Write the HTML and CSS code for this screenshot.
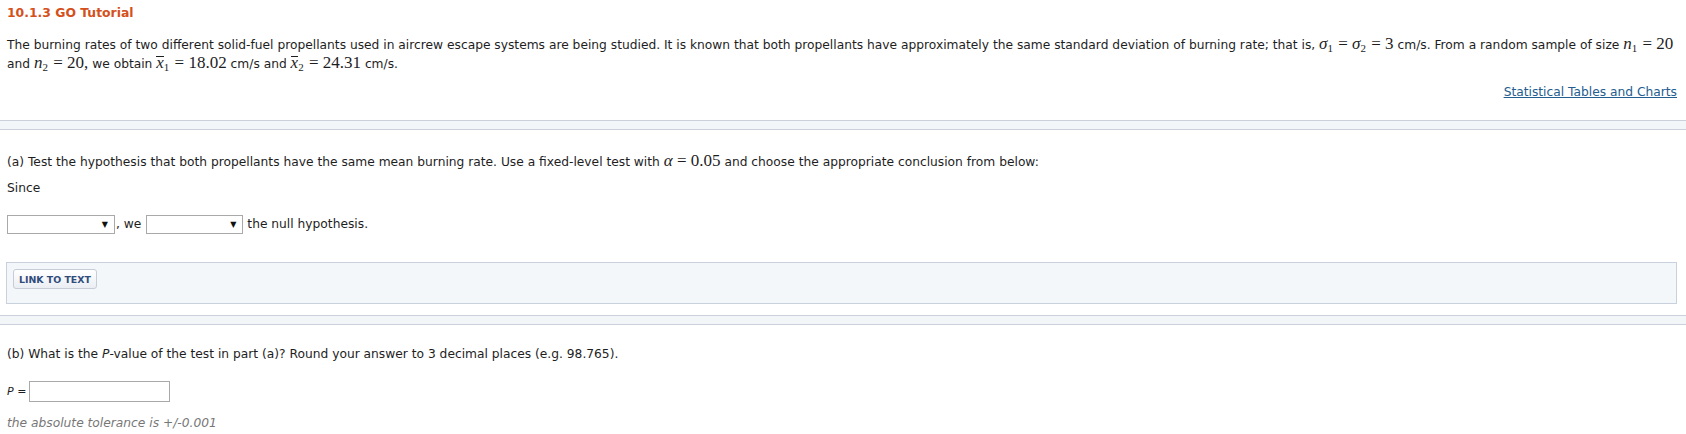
FILE: index.html
```html
<!DOCTYPE html>
<html lang="en">
<head>
    <meta charset="UTF-8">
    <title>10.1.3 GO Tutorial</title>
    <link rel="stylesheet" href="styles.css">
</head>
<body>

<!-- Question header -->
<div class="page">
    <div class="title">10.1.3 GO Tutorial</div>
    <p class="intro">
        The burning rates of two different solid-fuel propellants used in aircrew escape systems are being studied. It is known that both propellants have approximately the same standard deviation of burning rate; that is,
        <span class="math"><i>σ</i><sub>1</sub> = <i>σ</i><sub>2</sub> = 3</span> cm/s. From a random sample of size <span class="math"><i>n</i><sub>1</sub> = 20</span>
        and <span class="math"><i>n</i><sub>2</sub> = 20,</span> we obtain <span class="math"><i class="bar">x</i><sub>1</sub> = 18.02</span> cm/s and <span class="math"><i class="bar">x</i><sub>2</sub> = 24.31</span> cm/s.
    </p>
    <div class="tables-link"><a href="#">Statistical Tables and Charts</a></div>
</div>

<div class="divider"></div>

<!-- Part (a) -->
<div class="page part-a">
    <p class="question">(a) Test the hypothesis that both propellants have the same mean burning rate. Use a fixed-level test with <span class="math"><i>α</i> = 0.05</span> and choose the appropriate conclusion from below:</p>
    <p class="since">Since</p>
    <div class="answer-row">
        <span class="select select-reason"><span class="arrow">▼</span></span>
        <span class="comma">, we</span>
        <span class="select select-decision"><span class="arrow">▼</span></span>
        <span>the null hypothesis.</span>
    </div>
    <div class="link-box">
        <button class="link-btn">LINK TO TEXT</button>
    </div>
</div>

<div class="divider divider-b"></div>

<!-- Part (b) -->
<div class="page part-b">
    <p class="question">(b) What is the <i>P</i>-value of the test in part (a)? Round your answer to 3 decimal places (e.g. 98.765).</p>
    <div class="p-row">
        <span class="p-label"><i>P</i> =</span>
        <input type="text" class="p-input">
    </div>
    <p class="tolerance">the absolute tolerance is +/-0.001</p>
</div>

</body>
</html>
```

FILE: styles.css
```css
body {
    margin: 0;
    font-family: "DejaVu Sans", Verdana, sans-serif;
    font-size: 12.25px;
    line-height: 17px;
    color: #1e1e1e;
    background-color: #fff;
}
p {
    margin: 0;
}
.page {
    padding: 0 9px 0 7px;
}
.title {
    padding-top: 4px;
    font-size: 12.4px;
    font-weight: bold;
    color: #d4501c;
}
.intro {
    margin-top: 14px;
}
.math {
    font-family: "Liberation Serif", "Times New Roman", serif;
    font-size: 17px;
    line-height: 1;
    white-space: nowrap;
}
.math i {
    font-style: italic;
}
.math sub {
    font-size: 11px;
    vertical-align: -3px;
    line-height: 0;
    margin-right: 1px;
}
.bar {
    display: inline-block;
    line-height: 11px;
    border-top: 1px solid #1e1e1e;
}
.tables-link {
    margin-top: 11px;
    text-align: right;
}
.tables-link a {
    color: #245d8f;
    text-decoration: underline;
}
.divider {
    margin-top: 19px;
    height: 8px;
    background-color: #f3f6f9;
    border-top: 1px solid #ccd0db;
    border-bottom: 1px solid #ccd0db;
}
.divider-b {
    margin-top: 11px;
}
.question {
    margin-top: 22px;
}
.since {
    margin-top: 9px;
}
.answer-row {
    margin-top: 18px;
    display: flex;
    align-items: center;
    height: 19px;
}
.select {
    display: inline-flex;
    justify-content: flex-end;
    align-items: center;
    box-sizing: border-box;
    height: 19px;
    border: 1px solid #a9a9a9;
    padding-right: 6px;
}
.select-reason {
    width: 108px;
}
.select-decision {
    width: 97px;
    margin-right: 4px;
}
.arrow {
    font-size: 8px;
    color: #111;
}
.comma {
    margin: 0 5px 0 1px;
}
.link-box {
    margin-top: 28px;
    margin-left: -1px;
    padding: 6px 6px 14px;
    background-color: #f4f7fa;
    border: 1px solid #c9d1dc;
}
.link-btn {
    display: block;
    height: 20px;
    padding: 0 5px;
    font-family: "DejaVu Sans", Verdana, sans-serif;
    font-size: 9.4px;
    font-weight: bold;
    color: #2f4c7c;
    background: linear-gradient(#ffffff, #eaeef3);
    border: 1px solid #c6cdd6;
    border-radius: 3px;
}
.part-b .question {
    margin-top: 21px;
}
.p-row {
    margin-top: 18px;
    display: flex;
    align-items: center;
}
.p-label {
    margin-right: 3px;
    font-size: 11px;
}
.p-input {
    box-sizing: border-box;
    width: 141px;
    height: 21px;
    margin: 0;
    border: 1px solid #a9a9a9;
}
.tolerance {
    margin-top: 13px;
    font-style: italic;
    color: #777;
}
```
